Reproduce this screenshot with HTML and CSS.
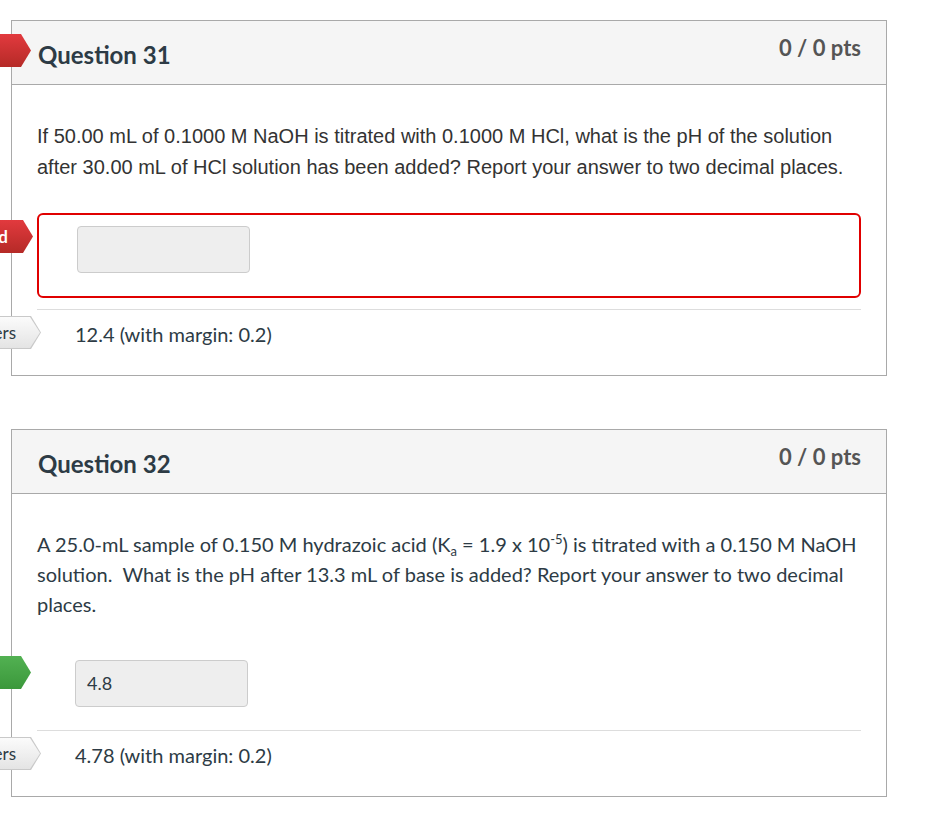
FILE: index.html
```html
<!DOCTYPE html>
<html>
<head>
<meta charset="utf-8">
<link rel="stylesheet" href="styles.css">
</head>
<body>
<div class="page">
  <section class="question q31">
    <span class="flag flag-red flag-header"></span>
    <header class="q-header">
      <h2 class="q-title">Question 31</h2>
      <span class="q-pts">0 / 0 pts</span>
    </header>
    <div class="q-body">
      <p class="q-text q-text-arial">If 50.00 mL of 0.1000 M NaOH is titrated with 0.1000 M HCl, what is the pH of the solution after 30.00 mL of HCl solution has been added? Report your answer to two decimal places.</p>
      <div class="answer answer-wrong">
        <span class="flag flag-red flag-answer">You Answered</span>
        <div class="answer-input"></div>
      </div>
      <div class="correct-row">
        <span class="flag flag-gray"><span class="flag-inner">Correct Answers</span></span>
        <span class="correct-text">12.4 (with margin: 0.2)</span>
      </div>
    </div>
  </section>

  <section class="question q32">
    <header class="q-header">
      <h2 class="q-title">Question 32</h2>
      <span class="q-pts">0 / 0 pts</span>
    </header>
    <div class="q-body">
      <p class="q-text q-text-lato">A 25.0-mL sample of 0.150 M hydrazoic acid (K<sub>a</sub> = 1.9 x 10<sup>-5</sup>) is titrated with a 0.150 M NaOH solution.&nbsp; What is the pH after 13.3 mL of base is added? Report your answer to two decimal places.</p>
      <div class="answer answer-right">
        <span class="flag flag-green flag-answer">Correct!</span>
        <div class="answer-input">4.8</div>
      </div>
      <div class="correct-row">
        <span class="flag flag-gray"><span class="flag-inner">Correct Answers</span></span>
        <span class="correct-text">4.78 (with margin: 0.2)</span>
      </div>
    </div>
  </section>
</div>
</body>
</html>
```
FILE: styles.css
```css
* { box-sizing: border-box; }
html, body { margin: 0; padding: 0; background: #fff; }
body {
  font-family: Lato, "Liberation Sans", sans-serif;
  color: #2d3b45;
  overflow-x: hidden;
}
.page {
  padding: 20px 0 0 11px;
  width: 887px;
  display: flex;
  flex-direction: column;
  gap: 53px;
}
.question {
  position: relative;
  border: 1px solid #a9a9a9;
  background: #fff;
}
.q-header {
  height: 64px;
  background: #f5f5f5;
  border-bottom: 1px solid #a9a9a9;
  display: flex;
  justify-content: space-between;
  align-items: flex-start;
  padding: 0 25px 0 26px;
}
.q-title {
  margin: 18px 0 0 0;
  font-size: 24px;
  font-weight: 700;
  line-height: 32px;
  color: #2d3b45;
}
.q-pts {
  margin-top: 12px;
  font-size: 22px;
  font-weight: 700;
  line-height: 30px;
  color: #555;
}
.q-body {
  padding: 0 25px 0 25px;
}
.q-text {
  margin: 0;
  font-size: 20px;
  color: #2d3b45;
}
.q-text-arial {
  font-family: "Liberation Sans", Arial, sans-serif;
  line-height: 31px;
  padding-top: 36px;
  color: #333;
}
.q-text-lato {
  font-family: Lato, sans-serif;
  line-height: 30px;
  padding-top: 35px;
}
.q-text sub, .q-text sup {
  font-size: 13px;
  line-height: 0;
}
.q-text sub {
  vertical-align: -4px;
}
.answer {
  position: relative;
  display: flex;
}
.answer-wrong {
  margin-top: 30px;
  height: 85px;
  border: 2px solid #e00000;
  border-radius: 6px;
  padding: 11px 0 0 38px;
}
.answer-right {
  margin-top: 41px;
  height: 70px;
  padding: 0 0 0 38px;
}
.answer-input {
  width: 173px;
  height: 47px;
  background: #eee;
  border: 1px solid #ccc;
  border-radius: 4px;
  font-size: 18px;
  line-height: 45px;
  padding-left: 11px;
  color: #2d3b45;
}
.correct-row {
  position: relative;
  border-top: 1px solid #ddd;
  margin-top: 11px;
  height: 66px;
  display: flex;
  padding: 11px 0 0 38px;
}
.answer-right + .correct-row { margin-top: 0; }
.correct-text {
  font-size: 20px;
  line-height: 26px;
}

/* flags that hang off the left edge of the box */
.flag {
  position: absolute;
  height: 33px;
  width: 120px;
  display: flex;
  align-items: center;
  justify-content: flex-end;
  white-space: nowrap;
  clip-path: polygon(0 0, calc(100% - 10px) 0, 100% 50%, calc(100% - 10px) 100%, 0 100%);
}
.flag-red {
  background: linear-gradient(#e23a3e, #b52a27);
  color: #fff;
  font-size: 17px;
  font-weight: 700;
  padding-right: 25px;
}
.flag-green {
  background: linear-gradient(#52b152, #3b983b);
  color: #fff;
  font-size: 16px;
  font-weight: 700;
  padding-right: 40px;
}
.flag-header {
  top: 13px;
  left: -101px;
  height: 33px;
}
.q31 .flag-answer {
  top: 5px;
  left: -126px;
}
.answer-right .flag-answer {
  top: -4px;
  left: -126px;
}
.flag-gray {
  top: 6px;
  left: -154px;
  width: 158px;
  background: #c9c9c9;
  padding: 1px 1px 1px 0;
}
.flag-inner {
  display: flex;
  align-items: center;
  justify-content: flex-end;
  width: 100%;
  height: 100%;
  background: linear-gradient(#fbfbfb, #e4e4e4);
  color: #2d3b45;
  font-size: 17px;
  padding-right: 24px;
  clip-path: polygon(0 0, calc(100% - 10px) 0, 100% 50%, calc(100% - 10px) 100%, 0 100%);
}
```
